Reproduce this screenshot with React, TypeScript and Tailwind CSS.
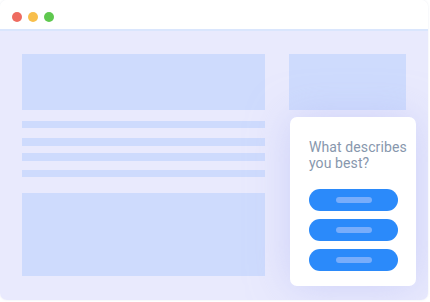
import React from 'react';

const App: React.FC = () => {
  return (
    <div className="w-[430px] h-[302px] bg-white" style={{ fontFamily: 'Roboto, "Liberation Sans", sans-serif' }}>
      <div className="w-[428px] h-[300px] rounded-[7px] overflow-hidden flex flex-col shadow-[0_0_2px_rgba(160,170,200,0.25)]">
        {/* Title bar */}
        <div className="h-[31px] shrink-0 bg-white border-b-2 border-[#dae6fd] flex items-start pt-[12px] pl-[12px] gap-[6px]">
          <span className="w-[10px] h-[10px] rounded-full bg-[#ee6b60]" />
          <span className="w-[10px] h-[10px] rounded-full bg-[#f8bf4c]" />
          <span className="w-[10px] h-[10px] rounded-full bg-[#5fc84f]" />
        </div>

        {/* Page */}
        <div className="flex-1 bg-[#e9eafd] flex pl-[22px] pt-[23px] gap-[24px]">
          <div className="w-[243px] flex flex-col">
            <div className="h-[56px] bg-[#cedbfd]" />
            <div className="h-[7px] mt-[11px] bg-[#cedbfd]" />
            <div className="h-[8px] mt-[10px] bg-[#cedbfd]" />
            <div className="h-[8px] mt-[7px] bg-[#cedbfd]" />
            <div className="h-[7px] mt-[9px] bg-[#cedbfd]" />
            <div className="h-[83px] mt-[16px] bg-[#cedbfd]" />
          </div>

          <div className="w-[117px] flex flex-col items-start">
            <div className="w-[117px] h-[56px] bg-[#cedbfd]" />
            <div className="mt-[7px] ml-[1px] w-[126px] h-[169px] bg-white rounded-[7px] shadow-[0_0_40px_rgba(180,185,245,0.55)] pt-[22px] pl-[19px] pr-[4px] flex flex-col">
              <p className="text-[14px] leading-[16px] text-[#8797ad] tracking-[0.1px]">
                What describes you best?
              </p>
              <div className="mt-[18px] flex flex-col gap-[8px]">
                {[0, 1, 2].map((i) => (
                  <div key={i} className="w-[89px] h-[22px] rounded-full bg-[#2b8afa] flex items-center justify-center">
                    <span className="w-[36px] h-[6px] rounded-full bg-[#78adfb]" />
                  </div>
                ))}
              </div>
            </div>
          </div>
        </div>
      </div>
    </div>
  );
};

export default App;
